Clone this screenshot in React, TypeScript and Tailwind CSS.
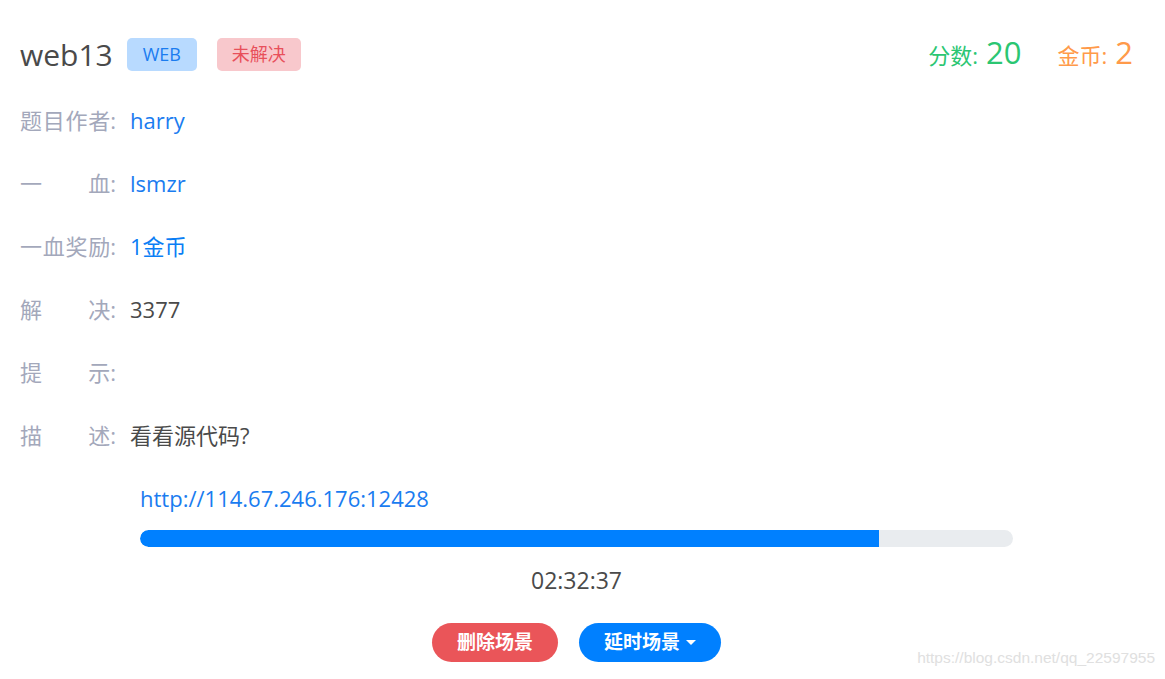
import React from "react";

const FONT = '"Open Sans", "Noto Sans CJK SC", sans-serif';

function Row({ label, children }: { label: string[]; children?: React.ReactNode }) {
  return (
    <div className="flex h-[63px] items-center">
      <div className="flex w-[96px] justify-between text-[22px] text-[#a3a8bb]">
        {label.map((p, i) => (
          <span key={i}>{p}</span>
        ))}
      </div>
      <div className="ml-[14px] text-[22px]">{children}</div>
    </div>
  );
}

export default function App() {
  return (
    <div className="relative h-[679px] w-[1165px] overflow-hidden bg-white" style={{ fontFamily: FONT }}>
      <div className="pl-5 pr-[32px] pt-[38px]">
        <div className="flex h-[33px] items-center justify-between">
          <div className="flex items-center">
            <span className="text-[30px] leading-none text-[#4a4a4a]">web13</span>
            <span className="ml-[14px] flex h-[33px] w-[70px] items-center justify-center rounded-[5px] bg-[#b8daff] text-[18px] text-[#1a7cf0]">
              WEB
            </span>
            <span className="ml-[20px] flex h-[33px] w-[84px] items-center justify-center rounded-[5px] bg-[#f8c8cc] text-[18px] text-[#e8505b]">
              未解决
            </span>
          </div>
          <div className="flex items-baseline">
            <span className="text-[22px] text-[#2bc672]">分数:</span>
            <span className="ml-[8px] text-[31px] leading-none text-[#2bc672]">20</span>
            <span className="ml-[36px] text-[22px] text-[#ff9a4a]">金币:</span>
            <span className="ml-[8px] text-[31px] leading-none text-[#ff9a4a]">2</span>
          </div>
        </div>

        <div className="mt-[18px]">
          <Row label={["题", "目", "作", "者:"]}>
            <span className="text-[#1a7cf0]">harry</span>
          </Row>
          <Row label={["一", "血:"]}>
            <span className="text-[#1a7cf0]">lsmzr</span>
          </Row>
          <Row label={["一", "血", "奖", "励:"]}>
            <span className="text-[#0a7ef5]">1金币</span>
          </Row>
          <Row label={["解", "决:"]}>
            <span className="text-[#4a4a4a]">3377</span>
          </Row>
          <Row label={["提", "示:"]} />
          <Row label={["描", "述:"]}>
            <span className="text-[#4a4a4a]">看看源代码?</span>
          </Row>
        </div>

        <div className="mx-auto w-[873px]">
          <div className="flex h-[63px] items-center text-[22px] text-[#1a7cf0]">http://114.67.246.176:12428</div>
          <div className="h-[17px] w-full overflow-hidden rounded-full bg-[#e9ecef]">
            <div className="h-full rounded-l-full bg-[#0080ff]" style={{ width: "84.7%" }} />
          </div>
          <div className="mt-[22px] text-center text-[23px] leading-none text-[#4a4a4a]">02:32:37</div>
        </div>

        <div className="mt-[31px] flex justify-center gap-[21px]">
          <button className="flex h-[39px] w-[126px] items-center justify-center rounded-full bg-[#ea5559] text-[19px] font-bold text-white">
            删除场景
          </button>
          <button className="flex h-[39px] w-[142px] items-center justify-center rounded-full bg-[#0080ff] text-[19px] font-bold text-white">
            延时场景
            <span className="ml-[6px] inline-block h-0 w-0 border-x-[5px] border-t-[5px] border-x-transparent border-t-white" />
          </button>
        </div>
      </div>

      <div
        className="absolute bottom-[10px] right-[10px] text-[15.5px] text-[#e0e0e0]"
        style={{ fontFamily: '"Liberation Sans", sans-serif' }}
      >
        https://blog.csdn.net/qq_22597955
      </div>
    </div>
  );
}
